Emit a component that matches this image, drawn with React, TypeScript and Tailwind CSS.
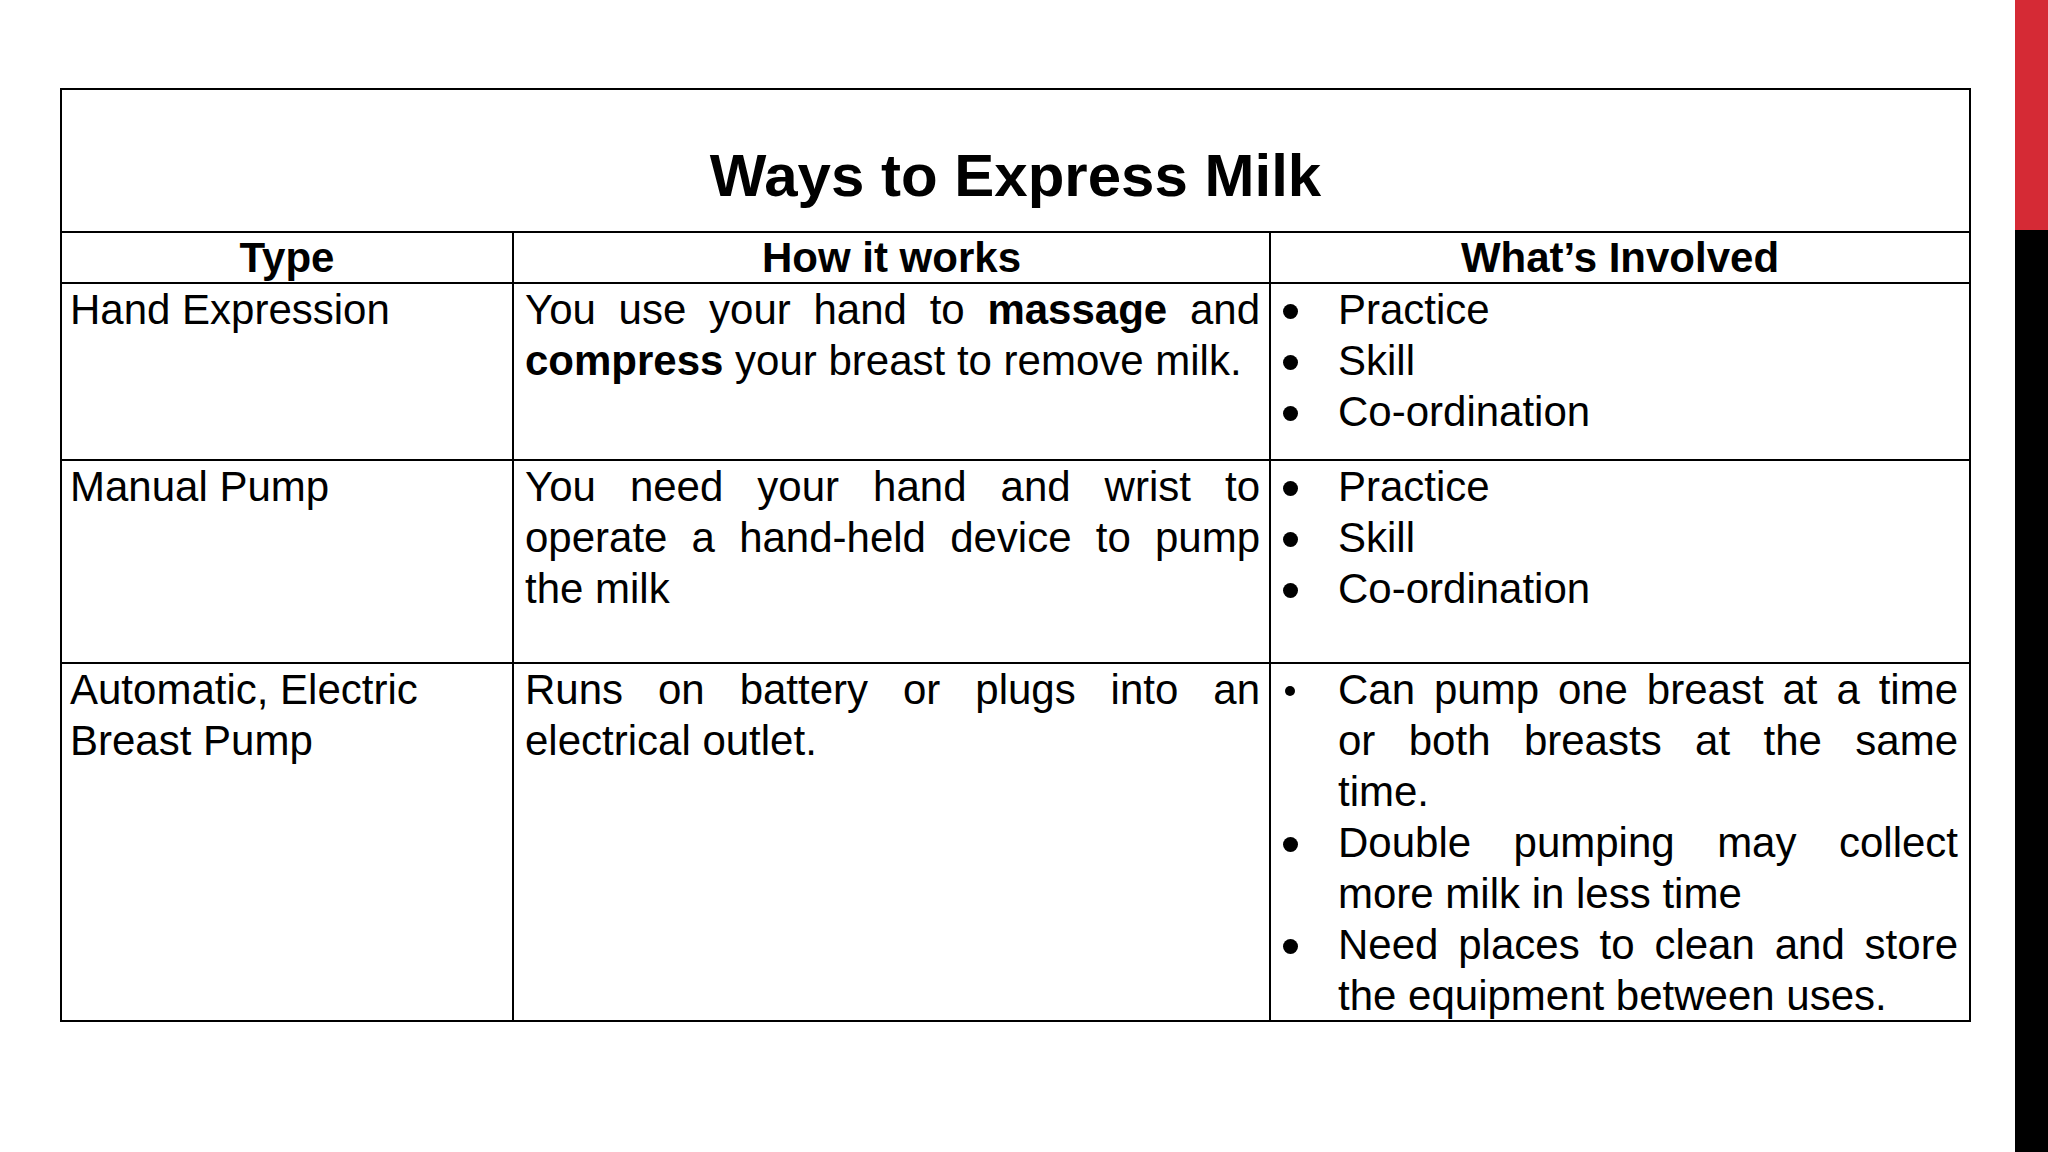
import { ReactElement } from "react";

type Bullet = { lines: string[]; small?: boolean };

interface Row {
  type: string;
  how: ReactElement;
  involved: Bullet[];
  height: string;
}

const rows: Row[] = [
  {
    type: "Hand Expression",
    how: (
      <>
        You use your hand to <b>massage</b> and <b>compress</b> your breast to
        remove milk.
      </>
    ),
    involved: [{ lines: ["Practice"] }, { lines: ["Skill"] }, { lines: ["Co-ordination"] }],
    height: "h-[177px]",
  },
  {
    type: "Manual Pump",
    how: <>You need your hand and wrist to operate a hand-held device to pump the milk</>,
    involved: [{ lines: ["Practice"] }, { lines: ["Skill"] }, { lines: ["Co-ordination"] }],
    height: "h-[203px]",
  },
  {
    type: "Automatic, Electric Breast Pump",
    how: <>Runs on battery or plugs into an electrical outlet.</>,
    involved: [
      {
        lines: ["Can pump one breast at a time", "or both breasts at the same", "time."],
        small: true,
      },
      { lines: ["Double pumping may collect more milk in less time"] },
      { lines: ["Need places to clean and store the equipment between uses."] },
    ],
    height: "h-[358px]",
  },
];

function BulletItem({ item }: { item: Bullet }): ReactElement {
  return (
    <li className="flex">
      <div className="w-[67px] shrink-0">
        {item.small ? (
          <div className="ml-[14px] mt-[22px] w-[10px] h-[10px] rounded-full bg-black" />
        ) : (
          <div className="ml-[12px] mt-[20px] w-[15px] h-[15px] rounded-full bg-black" />
        )}
      </div>
      <div className="flex-1 text-justify">
        {item.lines.length === 1
          ? item.lines[0]
          : item.lines.map((line, k) => (
              <span
                key={k}
                className={
                  k < item.lines.length - 1
                    ? "block [text-align-last:justify]"
                    : "block"
                }
              >
                {line}
              </span>
            ))}
      </div>
    </li>
  );
}

export default function App(): ReactElement {
  return (
    <div className="flex w-full h-[1152px] bg-white text-black font-[family-name:'Liberation_Sans',Arial,sans-serif]">
      {/* slide */}
      <div className="flex-1 pl-[60px] pt-[88px]">
        <div className="w-[1911px] border-2 border-black">
          {/* title */}
          <div className="h-[141px] pt-[56px] text-center text-[60px] leading-[60px] font-bold">
            Ways to Express Milk
          </div>

          {/* header */}
          <div className="grid grid-cols-[450px_757px_700px] border-t-2 border-black h-[51px] text-[42px] leading-[46px] font-bold text-center">
            <div className="pt-[2px]">Type</div>
            <div className="pt-[2px] border-l-2 border-black">How it works</div>
            <div className="pt-[2px] border-l-2 border-black">What’s Involved</div>
          </div>

          {/* body rows */}
          {rows.map((row, i) => (
            <div
              key={i}
              className={`grid grid-cols-[450px_757px_700px] border-t-2 border-black text-[42px] leading-[51px] ${row.height}`}
            >
              <div className="pl-[8px] pr-[8px]">{row.type}</div>
              <div className="border-l-2 border-black pl-[11px] pr-[9px] text-justify">
                {row.how}
              </div>
              <div className="border-l-2 border-black pr-[11px]">
                <ul>
                  {row.involved.map((b, j) => (
                    <BulletItem key={j} item={b} />
                  ))}
                </ul>
              </div>
            </div>
          ))}
        </div>
      </div>

      {/* side accent bar */}
      <div className="w-[33px] flex flex-col">
        <div className="h-[230px] bg-[#d52a35]" />
        <div className="flex-1 bg-black" />
      </div>
    </div>
  );
}
